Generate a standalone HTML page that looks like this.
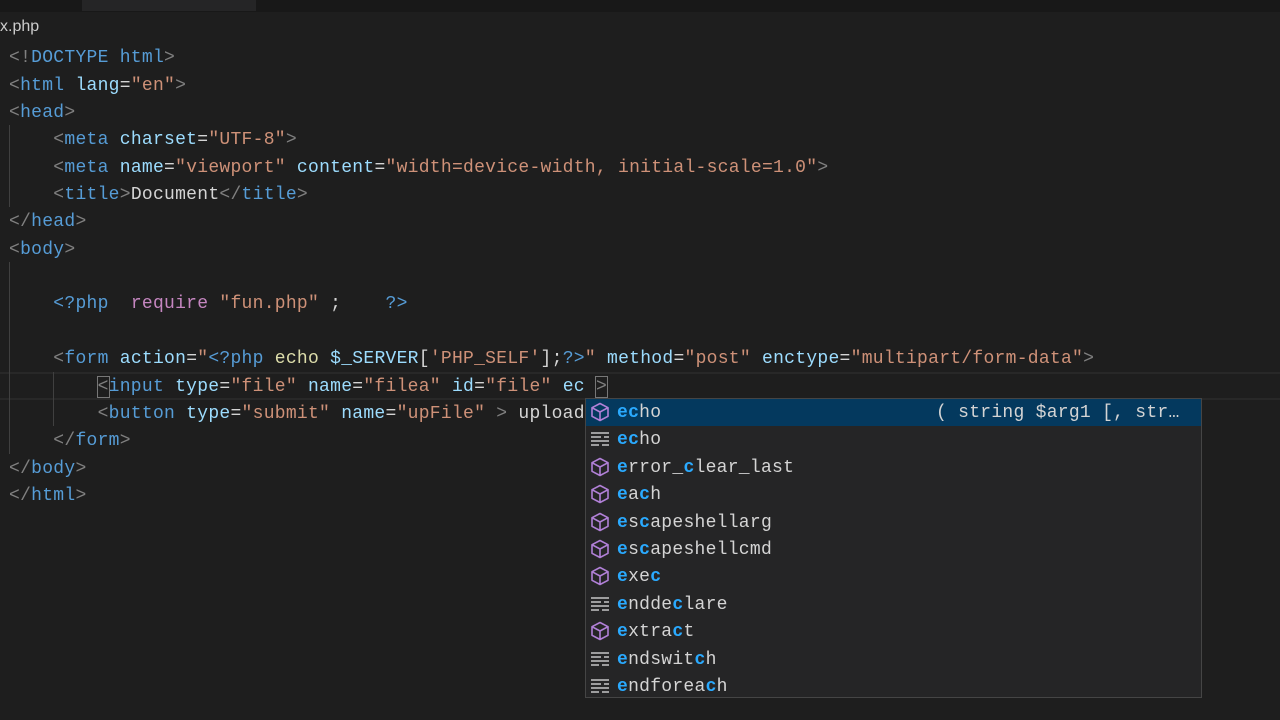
<!DOCTYPE html>
<html><head><style>
body{margin:0;width:1280px;height:720px;background:#1e1e1e;overflow:hidden;position:relative;font-family:"Liberation Mono",monospace;}
.top{position:absolute;left:0;top:0;width:1280px;height:12px;background:#181818}
.tab{position:absolute;left:82px;top:0;width:174px;height:11px;background:#252526}
.fn{position:absolute;left:0;top:18px;font:16px "Liberation Sans",sans-serif;color:#cccccc}
.l{position:absolute;left:9px;font-size:18px;letter-spacing:0.27px;white-space:pre;color:#d4d4d4;line-height:27px;height:27px}
.b{color:#808080}.t{color:#569cd6}.a{color:#9cdcfe}.s{color:#ce9178}.k{color:#c586c0}.f{color:#dcdcaa}.w{color:#d4d4d4}
.cur{position:absolute;left:0;top:372px;width:1280px;height:24px;border-top:2px solid #282828;border-bottom:2px solid #282828}
.guide{position:absolute;width:1px;background:#404040}
.sug{position:absolute;left:585px;top:398px;width:617px;height:300px;background:#252526;border:1px solid #454545;box-sizing:border-box}
.row{position:absolute;left:0;width:615px;height:27px;font-size:18px;letter-spacing:0.27px;line-height:27px;color:#d4d4d4;white-space:pre}
.row.sel{background:#04395e}
.row .n{position:absolute;left:31px;top:1px}
.row .d{position:absolute;left:350px;top:1px;color:#d4d4d4}
.m{color:#2aaaff;font-weight:bold}
.ic{position:absolute;left:4px;top:3px}
</style></head><body>
<div class="top"></div><div class="tab"></div>
<div class="fn">x.php</div>
<div class="cur"></div>
<div class="guide" style="left:9px;top:125px;height:82px"></div>
<div class="guide" style="left:9px;top:262px;height:192px"></div>
<div class="guide" style="left:53px;top:372px;height:54px"></div>
<div class="l" style="top:45px"><span class="b">&lt;!</span><span class="t">DOCTYPE html</span><span class="b">&gt;</span></div>
<div class="l" style="top:73px"><span class="b">&lt;</span><span class="t">html</span> <span class="a">lang</span>=<span class="s">"en"</span><span class="b">&gt;</span></div>
<div class="l" style="top:100px"><span class="b">&lt;</span><span class="t">head</span><span class="b">&gt;</span></div>
<div class="l" style="top:127px">    <span class="b">&lt;</span><span class="t">meta</span> <span class="a">charset</span>=<span class="s">"UTF-8"</span><span class="b">&gt;</span></div>
<div class="l" style="top:155px">    <span class="b">&lt;</span><span class="t">meta</span> <span class="a">name</span>=<span class="s">"viewport"</span> <span class="a">content</span>=<span class="s">"width=device-width, initial-scale=1.0"</span><span class="b">&gt;</span></div>
<div class="l" style="top:182px">    <span class="b">&lt;</span><span class="t">title</span><span class="b">&gt;</span>Document<span class="b">&lt;/</span><span class="t">title</span><span class="b">&gt;</span></div>
<div class="l" style="top:209px"><span class="b">&lt;/</span><span class="t">head</span><span class="b">&gt;</span></div>
<div class="l" style="top:237px"><span class="b">&lt;</span><span class="t">body</span><span class="b">&gt;</span></div>
<div class="l" style="top:291px">    <span class="t">&lt;?php</span>  <span class="k">require</span> <span class="s">"fun.php"</span> ;    <span class="t">?&gt;</span></div>
<div class="l" style="top:346px">    <span class="b">&lt;</span><span class="t">form</span> <span class="a">action</span>=<span class="s">"</span><span class="t">&lt;?php</span> <span class="f">echo</span> <span class="a">$_SERVER</span>[<span class="s">'PHP_SELF'</span>];<span class="t">?&gt;</span><span class="s">"</span> <span class="a">method</span>=<span class="s">"post"</span> <span class="a">enctype</span>=<span class="s">"multipart/form-data"</span><span class="b">&gt;</span></div>
<div class="l" style="top:374px">        <span class="b" style="outline:1px solid #777">&lt;</span><span class="t">input</span> <span class="a">type</span>=<span class="s">"file"</span> <span class="a">name</span>=<span class="s">"filea"</span> <span class="a">id</span>=<span class="s">"file"</span> <span class="a">ec</span> <span class="b" style="outline:1px solid #777">&gt;</span></div>
<div class="l" style="top:401px">        <span class="b">&lt;</span><span class="t">button</span> <span class="a">type</span>=<span class="s">"submit"</span> <span class="a">name</span>=<span class="s">"upFile"</span> <span class="b">&gt;</span> upload</div>
<div class="l" style="top:428px">    <span class="b">&lt;/</span><span class="t">form</span><span class="b">&gt;</span></div>
<div class="l" style="top:456px"><span class="b">&lt;/</span><span class="t">body</span><span class="b">&gt;</span></div>
<div class="l" style="top:483px"><span class="b">&lt;/</span><span class="t">html</span><span class="b">&gt;</span></div>

<svg width="0" height="0" style="position:absolute"><defs>
<g id="cube"><path d="M10 1.5 L18 5.7 V14.3 L10 18.5 L2 14.3 V5.7 Z M2 5.7 L10 10 L18 5.7 M10 10 V18.5" fill="none" stroke="#b180d7" stroke-width="1.6" stroke-linejoin="round"/></g>
<g id="snip"><path d="M1 4H19M1 8H11M14 8H19M1 12H19M1 16H9M12 16H19" stroke="#c5c5c5" stroke-width="1.6"/></g>
</defs></svg>
<div class="sug">
<div class="row sel" style="top:0"><svg class="ic" width="20" height="20"><use href="#cube"/></svg><span class="n"><span class="m">ec</span>ho</span><span class="d">( string $arg1 [, str…</span></div>
<div class="row" style="top:27.4px"><svg class="ic" width="20" height="20"><use href="#snip"/></svg><span class="n"><span class="m">ec</span>ho</span></div>
<div class="row" style="top:54.8px"><svg class="ic" width="20" height="20"><use href="#cube"/></svg><span class="n"><span class="m">e</span>rror_<span class="m">c</span>lear_last</span></div>
<div class="row" style="top:82.2px"><svg class="ic" width="20" height="20"><use href="#cube"/></svg><span class="n"><span class="m">e</span>a<span class="m">c</span>h</span></div>
<div class="row" style="top:109.6px"><svg class="ic" width="20" height="20"><use href="#cube"/></svg><span class="n"><span class="m">e</span>s<span class="m">c</span>apeshellarg</span></div>
<div class="row" style="top:137px"><svg class="ic" width="20" height="20"><use href="#cube"/></svg><span class="n"><span class="m">e</span>s<span class="m">c</span>apeshellcmd</span></div>
<div class="row" style="top:164.4px"><svg class="ic" width="20" height="20"><use href="#cube"/></svg><span class="n"><span class="m">e</span>xe<span class="m">c</span></span></div>
<div class="row" style="top:191.8px"><svg class="ic" width="20" height="20"><use href="#snip"/></svg><span class="n"><span class="m">e</span>ndde<span class="m">c</span>lare</span></div>
<div class="row" style="top:219.2px"><svg class="ic" width="20" height="20"><use href="#cube"/></svg><span class="n"><span class="m">e</span>xtra<span class="m">c</span>t</span></div>
<div class="row" style="top:246.6px"><svg class="ic" width="20" height="20"><use href="#snip"/></svg><span class="n"><span class="m">e</span>ndswit<span class="m">c</span>h</span></div>
<div class="row" style="top:274px"><svg class="ic" width="20" height="20"><use href="#snip"/></svg><span class="n"><span class="m">e</span>ndforea<span class="m">c</span>h</span></div>
</div>
</body></html>
